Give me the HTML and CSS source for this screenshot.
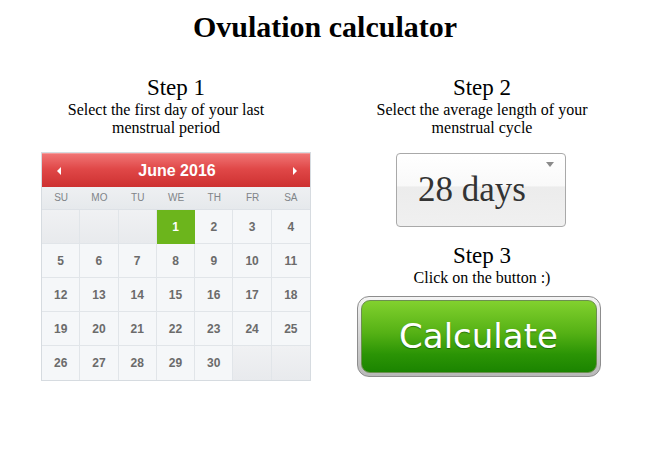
FILE: index.html
```html
<!DOCTYPE html>
<html lang="en">
<head>
<meta charset="UTF-8">
<meta name="viewport" content="width=device-width, initial-scale=1">
<title>Ovulation calculator</title>
<link rel="stylesheet" href="styles.css">
</head>
<body>

<div id="page">
	<h1>Ovulation calculator</h1>

	<div class="steps">
		<div class="step step_left">
			<h2>Step 1</h2>
			<p class="note note_left">Select the first day of your last menstrual period</p>

			<div class="cal">
				<div class="cal_head">
					<span class="arr arr_prev"></span>
					<span class="cal_title">June 2016</span>
					<span class="arr arr_next"></span>
				</div>
				<div class="cal_days">
					<span>SU</span><span>MO</span><span>TU</span><span>WE</span><span>TH</span><span>FR</span><span>SA</span>
				</div>
				<div class="cal_grid">
					<span class="empty"></span><span class="empty"></span><span class="empty"></span>
					<span class="sel">1</span><span>2</span><span>3</span><span>4</span>
					<span>5</span><span>6</span><span>7</span><span>8</span><span>9</span><span>10</span><span>11</span>
					<span>12</span><span>13</span><span>14</span><span>15</span><span>16</span><span>17</span><span>18</span>
					<span>19</span><span>20</span><span>21</span><span>22</span><span>23</span><span>24</span><span>25</span>
					<span>26</span><span>27</span><span>28</span><span>29</span><span>30</span><span class="empty"></span><span class="empty"></span>
				</div>
			</div>
		</div>

		<div class="step step_right">
			<h2>Step 2</h2>
			<p class="note note_right">Select the average length of your menstrual cycle</p>

			<div class="cycle">
				<span class="cycle_val">28 days</span>
				<span class="cycle_arr"></span>
			</div>

			<h2 class="step3">Step 3</h2>
			<p class="note">Click on the button :)</p>

			<div class="calc_btn">
				<div class="calc_face">Calculate</div>
			</div>
		</div>
	</div>
</div>

</body>
</html>
```

FILE: styles.css
```css
*,
*::before,
*::after {
	margin: 0;
	padding: 0;
	box-sizing: border-box;
}
BODY {
	margin: 0;
	color: #000;
	background: #fff;
	font-family: "Liberation Serif", "Times New Roman", serif;
}

#page {
	width: 600px;
	margin-left: 25px;
}
h1 {
	margin-top: 10px;
	font-size: 30px;
	line-height: 34px;
	font-weight: bold;
	text-align: center;
}

.steps {
	display: grid;
	grid-template-columns: 302px 310px;
	margin-top: 31px;
}
.step {
	display: flex;
	flex-direction: column;
	align-items: center;
	text-align: center;
}
h2 {
	font-size: 23px;
	line-height: 26px;
	font-weight: normal;
}
.note {
	font-size: 16px;
	line-height: 18px;
	width: 100%;
}
.note_left {
	padding: 0 46px 0 26px;
}
.note_right {
	width: 236px;
}

/* calendar */
.cal {
	width: 270px;
	margin-top: 15px;
	border: 1px solid #d6dbe0;
	font-family: "Liberation Sans", Arial, sans-serif;
}
.cal_head {
	display: flex;
	align-items: center;
	justify-content: space-between;
	height: 34px;
	padding: 0 13px 0 15px;
	background: linear-gradient(#f07474, #e04848 45%, #cd3030);
	border-top: 1px solid #f49a9a;
}
.cal_title {
	color: #fff;
	font-size: 16px;
	font-weight: bold;
}
.arr {
	width: 0;
	height: 0;
	border-top: 4px solid transparent;
	border-bottom: 4px solid transparent;
}
.arr_prev { border-right: 4px solid #fff; }
.arr_next { border-left: 4px solid #fff; }

.cal_days {
	display: grid;
	grid-template-columns: repeat(7, 1fr);
	height: 23px;
	background: linear-gradient(#eef0f2, #e6e9ec);
	border-bottom: 1px solid #dde1e6;
}
.cal_days span {
	font-size: 10px;
	color: #808488;
	line-height: 22px;
	text-align: center;
}

.cal_grid {
	display: grid;
	grid-template-columns: repeat(7, 1fr);
	grid-auto-rows: 34px;
}
.cal_grid span {
	display: flex;
	align-items: center;
	justify-content: center;
	background: #f5f7f9;
	border-right: 1px solid #e1e5e9;
	border-bottom: 1px solid #e1e5e9;
	color: #6b6b6b;
	font-size: 12px;
	font-weight: bold;
}
.cal_grid span:nth-child(7n) { border-right: none; }
.cal_grid span:nth-last-child(-n+7) { border-bottom: none; }
.cal_grid .empty {
	background: linear-gradient(#f0f1f3, #e8eaed);
}
.cal_grid .sel {
	background: #6cb51c;
	border-color: #6cb51c;
	color: #fff;
}

/* cycle length box */
.cycle {
	position: relative;
	width: 170px;
	height: 74px;
	margin: 16px 2px 0 0;
	padding: 0 0 0 21px;
	border: 1px solid #a9a9a9;
	border-radius: 4px;
	background: linear-gradient(#fff 0%, #f9f9f9 44%, #ececec 46%, #f0f0f0 100%);
	text-align: left;
}
.cycle_val {
	display: block;
	font-size: 35px;
	line-height: 72px;
	color: #333;
}
.cycle_arr {
	position: absolute;
	right: 11px;
	top: 8px;
	width: 0;
	height: 0;
	border-left: 4px solid transparent;
	border-right: 4px solid transparent;
	border-top: 5px solid #8a8a8a;
}

.step3 {
	margin-top: 16px;
}

/* calculate button */
.calc_btn {
	width: 244px;
	height: 81px;
	margin: 9px 7px 0 0;
	padding: 3px;
	border: 1px solid #8d8d8d;
	border-radius: 12px;
	background: linear-gradient(#f4f4f4, #d4d4d4 50%, #b8b8b8);
}
.calc_face {
	height: 100%;
	border: 1px solid #6c8f50;
	border-radius: 9px;
	background: linear-gradient(#82d12e, #55b115 45%, #2b9405 75%, #1b8400);
	color: #fff;
	font-family: "DejaVu Sans", Verdana, sans-serif;
	font-size: 34px;
	line-height: 71px;
	text-align: center;
	text-shadow: 0 1px 1px rgba(0, 60, 0, 0.5);
}
```
